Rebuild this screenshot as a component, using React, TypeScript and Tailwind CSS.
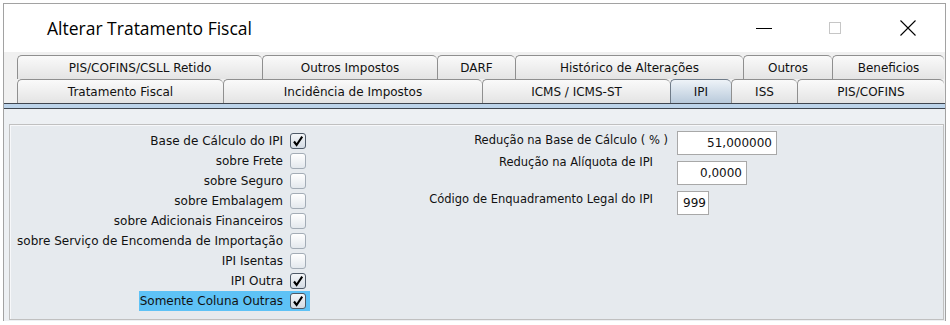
import React from "react";

type TabDef = { label: string; w: string; selected?: boolean };

const topRow: TabDef[] = [
  { label: "PIS/COFINS/CSLL Retido", w: "w-[245px]" },
  { label: "Outros Impostos", w: "w-[175px]" },
  { label: "DARF", w: "w-[78px]" },
  { label: "Histórico de Alterações", w: "w-[228px]" },
  { label: "Outros", w: "w-[89px]" },
  { label: "Beneficios", w: "w-[112px]" },
];

const bottomRow: TabDef[] = [
  { label: "Tratamento Fiscal", w: "w-[206px]" },
  { label: "Incidência de Impostos", w: "w-[259px]" },
  { label: "ICMS / ICMS-ST", w: "w-[188px]" },
  { label: "IPI", w: "w-[61px]", selected: true },
  { label: "ISS", w: "w-[66px]" },
  { label: "PIS/COFINS", w: "w-[147px]" },
];

const checks: { label: string; checked: boolean; highlight?: boolean }[] = [
  { label: "Base de Cálculo do IPI", checked: true },
  { label: "sobre Frete", checked: false },
  { label: "sobre Seguro", checked: false },
  { label: "sobre Embalagem", checked: false },
  { label: "sobre Adicionais Financeiros", checked: false },
  { label: "sobre Serviço de Encomenda de Importação", checked: false },
  { label: "IPI Isentas", checked: false },
  { label: "IPI Outra", checked: true },
  { label: "Somente Coluna Outras", checked: true, highlight: true },
];

function Tab({ tab }: { tab: TabDef }) {
  const fill = tab.selected
    ? "bg-gradient-to-b from-[#eef3f8] to-[#b9cadb] border-[#6f7b88]"
    : "bg-gradient-to-b from-[#fafafa] to-[#e4e4e4] border-[#8f8f8f]";
  return (
    <div
      className={`${tab.w} ${fill} flex h-[24px] shrink-0 items-center justify-center rounded-t-[5px] border-l border-t text-[#111]`}
    >
      {tab.label}
    </div>
  );
}

function CheckBox({ checked }: { checked: boolean }) {
  return (
    <div
      className={`flex h-[16px] w-[16px] items-center justify-center rounded-[3px] border ${
        checked
          ? "border-[#4d5967] bg-gradient-to-b from-[#f4f6f8] to-[#d3dbe3]"
          : "border-[#a3acb6] bg-gradient-to-b from-[#ffffff] to-[#e3e8ed]"
      }`}
    >
      {checked ? (
        <svg width="12" height="12" viewBox="0 0 12 12">
          <path d="M2 6.5 L4.6 10 L10.2 1.6" fill="none" stroke="#000" strokeWidth="2.1" />
        </svg>
      ) : null}
    </div>
  );
}

export default function App() {
  return (
    <div className="h-[325px] w-[950px] overflow-hidden bg-white pt-[3px] font-['DejaVu_Sans',sans-serif] text-[12px]">
      <div className="ml-[3px] w-[943px] border-x border-t border-[#a2a2a2] bg-[#f0f0f0]">
        {/* title bar */}
        <div className="flex h-[48px] items-center bg-white">
          <div className="pl-[43px] font-['Open_Sans',sans-serif] text-[17.5px] text-black">
            Alterar Tratamento Fiscal
          </div>
          <div className="ml-auto flex h-full items-center">
            <div className="flex h-full w-[71px] items-center justify-center">
              <div className="h-px w-[16px] bg-black" />
            </div>
            <div className="flex h-full w-[71px] items-center justify-center">
              <div className="h-[12px] w-[12px] border border-[#c6c6c6]" />
            </div>
            <div className="flex h-full w-[75px] items-center justify-center">
              <svg width="16" height="16" viewBox="0 0 16 16">
                <path d="M0.5 0.5 L15.5 15.5 M15.5 0.5 L0.5 15.5" stroke="#000" strokeWidth="1.1" />
              </svg>
            </div>
          </div>
        </div>

        {/* tabs */}
        <div className="pl-[13px] pt-[3px]">
          <div className="flex">
            {topRow.map((t) => (
              <Tab key={t.label} tab={t} />
            ))}
          </div>
          <div className="flex">
            {bottomRow.map((t) => (
              <Tab key={t.label} tab={t} />
            ))}
          </div>
        </div>
        <div className="h-[6px] border-y border-[#3f4650] bg-[#bdd4ea]" />

        {/* panel */}
        <div className="h-[212px] bg-[#edf0f3] pl-[5px] pr-px pt-[15px]">
          <div className="flex h-[196px] border border-[#c0c0c0] bg-[#e6eaee] text-[#111] shadow-[inset_1px_1px_0_#f7f8fa]">
            <div className="flex w-[300px] flex-col items-end pt-[6px]">
              {checks.map((c) => (
                <div key={c.label} className="flex h-[20px] items-center">
                  <div
                    className={`flex h-[20px] items-center pl-px pr-[4px] ${c.highlight ? "bg-[#5ec2f6]" : ""}`}
                  >
                    <span>{c.label}</span>
                    <div className="ml-[7px]">
                      <CheckBox checked={c.checked} />
                    </div>
                  </div>
                </div>
              ))}
            </div>

            <div className="flex w-[358px] flex-col items-end pt-[8px] text-[11.5px] leading-[14px]">
              <div>Redução na Base de Cálculo ( % )</div>
              <div className="mt-[8px] pr-[15px]">Redução na Alíquota de IPI</div>
              <div className="mt-[23px] pr-[15px]">Código de Enquadramento Legal do IPI</div>
            </div>

            <div className="ml-[9px] flex flex-col gap-[6px] pt-[6px]">
              <div className="flex h-[24px] w-[100px] items-center justify-end border border-[#a8a8a8] bg-white pr-[4px]">
                51,000000
              </div>
              <div className="flex h-[24px] w-[70px] items-center justify-end border border-[#a8a8a8] bg-white pr-[4px]">
                0,0000
              </div>
              <div className="flex h-[24px] w-[32px] items-center border border-[#a8a8a8] bg-white pl-[5px]">
                999
              </div>
            </div>
          </div>
        </div>
      </div>
    </div>
  );
}
